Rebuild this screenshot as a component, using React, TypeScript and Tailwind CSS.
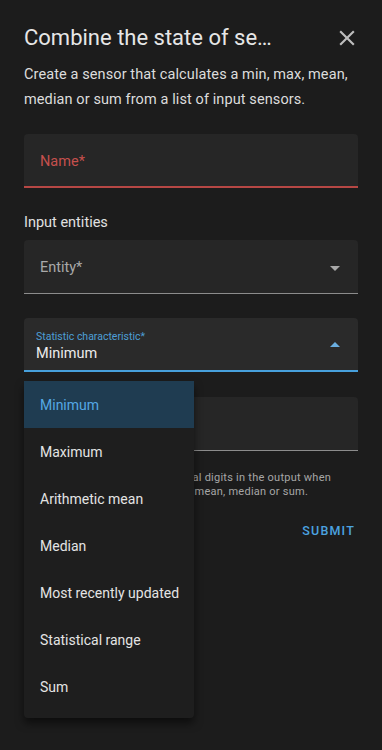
import { useState } from "react"

const options = [
  "Minimum",
  "Maximum",
  "Arithmetic mean",
  "Median",
  "Most recently updated",
  "Statistical range",
  "Sum",
]

function ArrowIcon({ up, className }: { up?: boolean; className?: string }) {
  return (
    <svg viewBox="0 0 24 24" className={className} fill="currentColor">
      {up ? <path d="M7 15l5-5 5 5z" /> : <path d="M7 10l5 5 5-5z" />}
    </svg>
  )
}

function App() {
  const [selected, setSelected] = useState("Minimum")

  return (
    <div className="min-h-[750px] w-[382px] bg-[#1c1c1c] font-['Roboto',sans-serif] text-[#e1e1e1]">
      <div className="px-6 pt-6">
        {/* Header */}
        <div className="flex h-7 items-center justify-between">
          <h1 className="w-[252px] truncate text-[22px] leading-7 text-[#e6e6e6]">
            Combine the state of several sensors
          </h1>
          <button className="-mr-[2px] text-[#bdbdbd]" aria-label="Close">
            <svg viewBox="0 0 24 24" className="h-[26px] w-[26px]" fill="currentColor">
              <path d="M19 6.41L17.59 5 12 10.59 6.41 5 5 6.41 10.59 12 5 17.59 6.41 19 12 13.41 17.59 19 19 17.59 13.41 12z" />
            </svg>
          </button>
        </div>

        <p className="mt-[10px] text-[14.5px] leading-[25px] tracking-[0.1px] text-[#dcdcdc]">
          Create a sensor that calculates a min, max, mean, median or sum from a list of input sensors.
        </p>

        {/* Name */}
        <div className="mt-[22px] flex h-[54px] items-center rounded-t bg-[#262626] border-b-2 border-[#b64744] px-4 pt-[3px]">
          <span className="text-[14.5px] text-[#c5504d]">Name*</span>
        </div>

        <div className="mt-[25px] text-[14.5px] leading-5 text-[#e1e1e1]">Input entities</div>

        {/* Entity */}
        <div className="mt-[7px] flex h-[54px] items-center justify-between rounded-t bg-[#262626] border-b border-[#8c8c8c] pl-4 pr-[11px] pt-[2px]">
          <span className="text-[14.5px] text-[#a9a9a9]">Entity*</span>
          <ArrowIcon className="h-6 w-6 text-[#a9a9a9]" />
        </div>

        {/* Statistic characteristic */}
        <div className="relative mt-[24px]">
          <div className="flex h-[54px] items-center justify-between rounded-t bg-[#2a2a2a] border-b-2 border-[#47a0dc] pl-3 pr-[11px]">
            <div className="flex flex-col pt-[6px]">
              <span className="text-[10.5px] leading-[14px] text-[#4d9fd6]">Statistic characteristic*</span>
              <span className="text-[14.5px] leading-5 text-[#ececec]">{selected}</span>
            </div>
            <ArrowIcon up className="h-6 w-6 text-[#6aaee0]" />
          </div>

          {/* Menu */}
          <div className="absolute left-0 top-[63px] z-10 w-[170px] rounded bg-[#1e1e1e] pb-2 shadow-[0_5px_8px_rgba(0,0,0,0.55)]">
            {options.map((o) => (
              <div
                key={o}
                onClick={() => setSelected(o)}
                className={`flex h-[47px] items-center whitespace-nowrap px-4 pt-[2px] text-[14px] ${
                  o === selected ? "bg-[#1f3c51] text-[#55a8e4]" : "text-[#e4e4e4]"
                }`}
              >
                {o}
              </div>
            ))}
          </div>
        </div>

        {/* Precision */}
        <div className="mt-[25px] flex h-[54px] items-center rounded-t bg-[#262626] border-b border-[#8c8c8c] px-4">
          <span className="text-[14.5px] text-[#a9a9a9]">Precision</span>
        </div>
        <p className="mt-[20px] px-4 text-[11px] leading-[14px] tracking-[0.25px] text-[#a6a6a6]">
          Controls the number of decimal digits in the output when the statistics characteristic is mean, median or sum.
        </p>

        <div className="mt-[14px] flex justify-end">
          <button className="h-9 px-[3px] text-[12.5px] font-medium tracking-[1.2px] text-[#4ba3e0]">
            SUBMIT
          </button>
        </div>
      </div>
    </div>
  )
}

export default App
